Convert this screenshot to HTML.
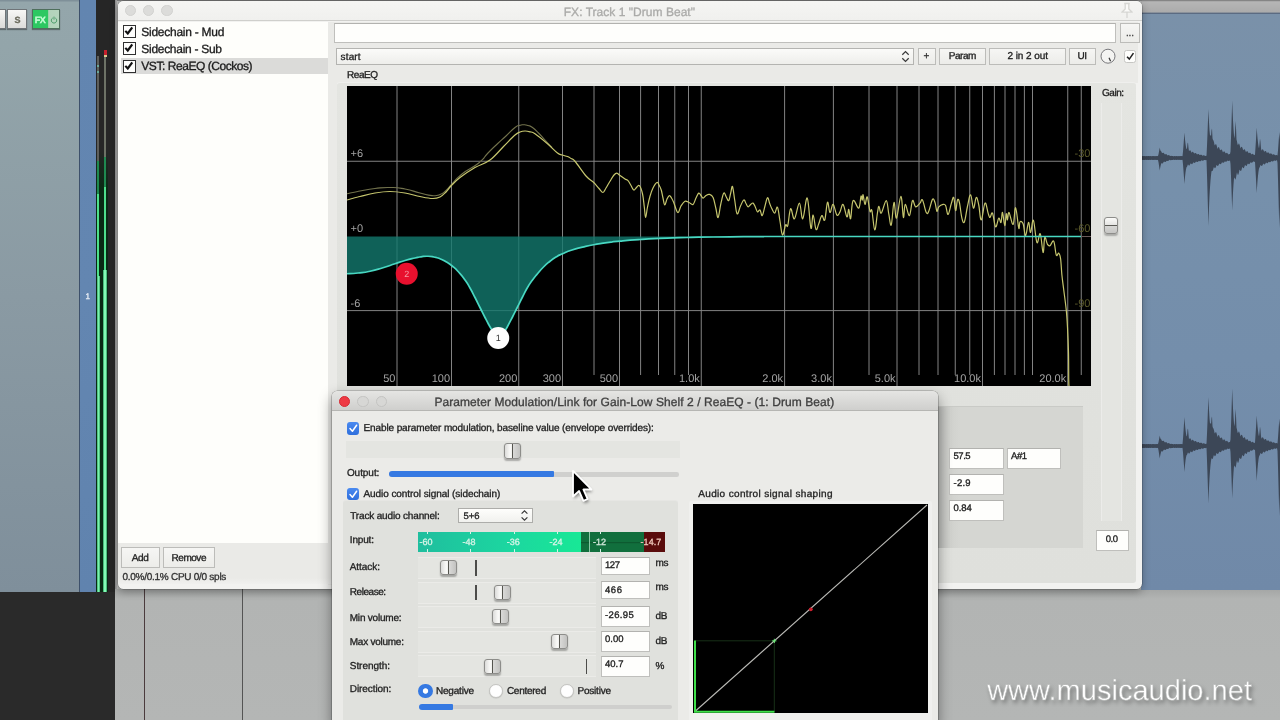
<!DOCTYPE html>
<html lang="en">
<head>
<meta charset="utf-8">
<title>FX: Track 1 "Drum Beat"</title>
<style>
*{box-sizing:border-box;margin:0;padding:0}
html,body{width:1280px;height:720px;overflow:hidden;background:#b3b5b4}
body{font-family:"Liberation Sans",sans-serif;font-size:10px;color:#222;text-rendering:geometricPrecision}
#stage{position:absolute;left:0;top:0;width:1280px;height:720px;overflow:hidden;will-change:transform;filter:blur(.45px)}
.a{position:absolute}
.g{position:absolute;left:0;top:0;width:0;height:0}
.t{position:absolute;white-space:pre;line-height:1;-webkit-text-stroke:.32px}
.btn{background:linear-gradient(#f6f6f4,#ecece9);border:1px solid #bcbcb9}
.inp{background:#fefefc;border:1px solid #bfbfbc;border-top-color:#b2b2af}
.th{width:17px;height:15px;border:1px solid #8d8d8a;border-radius:3px;background:linear-gradient(90deg,#dcdcda 0,#fafaf8 35%,#efefed 47%,#55554f 48%,#55554f 54%,#d9d9d7 55%,#c2c2c0 100%);box-shadow:0 1.5px 1.5px rgba(0,0,0,.28)}
.mk{width:1.5px;background:#4c4c4a}
.band{background:#e4e5e1;border-top:1px solid #ebebe8;border-bottom:1px solid #ebebe8}
.cb{width:12.5px;height:12.5px;border-radius:3px;background:linear-gradient(#4a8af0,#2f6fdc)}
.rb{width:14px;height:14px;border-radius:50%;background:#fefefe;border:1px solid #c4c4c1;box-shadow:0 .5px 1px rgba(0,0,0,.15)}
.lcb{width:13px;height:13px;border:1.8px solid #303030;background:#fefefc}
</style>
</head>
<body>
<div id="stage">
<!-- backdrop: track panel, meters, arrange view -->
<div id="backdrop" class="g">
<div class="a" style="left:0px;top:0px;width:79px;height:592.5px;background:linear-gradient(#7f9099 0,#7f9099 1px,#94a6ab 2px,#93a5aa 8%,#8a9aa3 50%,#7f8f9b 100%)"></div>
<div class="a" style="left:79px;top:0px;width:1.2px;height:592.5px;background:#3d506b"></div>
<div class="a" style="left:80px;top:0px;width:15.6px;height:592.5px;background:linear-gradient(#6285b0,#6386b1 50%,#6083ae)"></div>
<div class="a" style="left:95.6px;top:0px;width:19.6px;height:592.5px;background:#262626"></div>
<div class="a" style="left:95.6px;top:150px;width:12.6px;height:442.5px;background:linear-gradient(#262626,#0a2a14 40px)"></div>
<div class="a" style="left:115px;top:0px;width:3.4px;height:590px;background:linear-gradient(90deg,#8a8a8a,#a4a4a4 55%,#c8c8c6)"></div>
<div class="a" style="left:97.2px;top:56px;width:2px;height:105px;background:#5e5f5c"></div>
<div class="a" style="left:104.2px;top:57px;width:2.2px;height:100px;background:#6d7266"></div>
<div class="a" style="left:104px;top:49.5px;width:2.6px;height:5.6px;background:#c8202c"></div>
<div class="a" style="left:104px;top:55px;width:2.6px;height:2px;background:#d8c890"></div>
<div class="a" style="left:97.3px;top:65px;width:1.8px;height:2.2px;background:#6aa89a"></div>
<div class="a" style="left:97.3px;top:70.5px;width:1.8px;height:2.5px;background:#6aa89a"></div>
<div class="a" style="left:97.2px;top:161px;width:2px;height:33px;background:#1f8a50"></div>
<div class="a" style="left:104.2px;top:156.5px;width:2.2px;height:31px;background:#1f8a50"></div>
<div class="a" style="left:97.2px;top:194px;width:2.2px;height:82px;background:#4ee08c"></div>
<div class="a" style="left:104.2px;top:187px;width:2.2px;height:83px;background:#4ee08c"></div>
<div class="a" style="left:96.7px;top:276px;width:3.5px;height:316px;background:linear-gradient(90deg,#2a9c5c,#7cf2ae 35%,#7cf2ae 65%,#2a9c5c)"></div>
<div class="a" style="left:103.3px;top:270px;width:3.3px;height:322px;background:linear-gradient(90deg,#2a9c5c,#84fbb6 35%,#84fbb6 65%,#2a9c5c)"></div>
<span class="t" style="left:85.5px;top:293px;font-size:8px;color:#e8eef6;">1</span>
<div class="a" style="left:-1px;top:9.4px;width:7px;height:20px;background:linear-gradient(#f6f6f4,#dadad8);border:1px solid #6f7478;box-shadow:0 1px 1px rgba(0,0,0,.35)"></div>
<div class="a" style="left:6.6px;top:9.4px;width:20.4px;height:20px;background:linear-gradient(#f7f7f5,#dcdcda);border:1px solid #6f7478;box-shadow:0 1px 1px rgba(0,0,0,.35)"></div>
<span class="t" style="left:14.4px;top:16px;font-size:9px;color:#6c6c5e;font-weight:bold;">S</span>
<div class="a" style="left:32.2px;top:9.4px;width:28.2px;height:20px;background:linear-gradient(90deg,#2cc862 0,#2cc862 15px,#b2d3ba 15.6px,#b6d5be 100%);border:1px solid #4f6f5c;box-shadow:0 1px 1px rgba(0,0,0,.35)"></div>
<span class="t" style="left:34.8px;top:16px;font-size:9px;color:#c4ffd6;letter-spacing:-0.45px;font-weight:bold;">FX</span>
<svg class="a" style="left:49px;top:15px" width="10" height="10" viewBox="0 0 10 10"><path d="M3.7 3A2.7 2.7 0 1 0 6.3 3M5 1.6V4.6" stroke="#4f9f6c" stroke-width="1" fill="none"/></svg>
<div class="a" style="left:0px;top:591.5px;width:115px;height:129px;background:#2a2a2a"></div>
<div class="a" style="left:115px;top:589px;width:1165px;height:131px;background:linear-gradient(#a4a6a5,#b2b4b3 10px,#b4b6b5)"></div>
<div class="a" style="left:144px;top:589px;width:1px;height:131px;background:#4b3b3d"></div>
<div class="a" style="left:242.2px;top:589px;width:1px;height:131px;background:#545454"></div>
<div class="a" style="left:1141px;top:0px;width:139px;height:14px;background:linear-gradient(#858585 0,#858585 1.2px,#b6b6b6 1.6px,#ababab 12.3px,#5b6b82 12.8px,#5b6b82 100%)"></div>
<div class="a" style="left:1141px;top:14px;width:139px;height:576px;background:linear-gradient(#7a91a9,#7690ab 30%,#748eab 60%,#7089a8)"></div>
<svg class="a" style="left:1141px;top:14px" width="139" height="576" viewBox="1141 14 139 576">
<path d="M1141.5 155.99L1142 156.35L1142.5 156.06L1143 155.9L1143.5 156.08L1144 156.32L1144.5 155.98L1145 155.92L1145.5 156.19L1146 156.2L1146.5 155.92L1147 155.97L1147.5 156.31L1148 156.09L1148.5 155.9L1149 156.05L1149.5 156.36L1150 156L1150.5 155.91L1151 156.15L1151.5 156.23L1152 155.94L1152.5 155.95L1153 156.27L1153.5 156.12L1154 155.9L1154.5 156.03L1155 156.4L1155.5 156.02L1156 155.9L1156.5 156.12L1157 156.27L1157.5 155.95L1158 155.94L1158.5 154.34L1159 151.6L1159.5 148.7L1159.7 147.5L1160 149.03L1160.5 150.8L1161 151.12L1161.5 151.97L1162 153.1L1162.5 153.1L1163 152.72L1163.5 152.76L1164 153.22L1164.5 153.98L1165 154.59L1165.5 154.2L1166 154.08L1166.5 154.28L1167 154.75L1167.5 155.38L1168 155.31L1168.5 155.12L1169 155.15L1169.5 155.42L1170 155.84L1170.5 155.93L1171 155.92L1171.5 155.86L1172 155.99L1172.5 155.9L1173 156.04L1173.5 156.38L1174 156.01L1174.5 155.91L1175 156.14L1175.5 156.25L1176 155.94L1176.5 155.94L1177 156.25L1177.5 156.14L1178 155.91L1178.5 156.01L1179 156.38L1179.5 156.04L1180 155.9L1180.5 156.11L1181 156.29L1181.5 155.96L1182 155.93L1182.5 156.22L1183 151.61L1183.5 145.18L1184 138.27L1184.4 132.5L1184.5 133.81L1185 139.41L1185.5 143.71L1186 147.01L1186.5 149.23L1187 148.52L1187.5 143.62L1188 142.62L1188.5 147.67L1189 151.32L1189.5 150.52L1190 150.25L1190.5 150.62L1191 151.54L1191.5 152.75L1192 152.19L1192.5 151.75L1193 151.81L1193.5 152.38L1194 153.28L1194.5 153.56L1195 153.06L1195.5 152.91L1196 153.19L1196.5 153.81L1197 154.61L1197.5 154.16L1198 153.89L1198.5 153.95L1199 154.34L1199.5 154.95L1200 155.06L1200.5 154.74L1201 154.66L1201.5 154.86L1202 155.28L1202.5 155.77L1203 155.46L1203.5 155.29L1204 155.35L1204.5 155.62L1205 156.03L1205.5 155.97L1206 155.85L1206.5 155.81L1207 145.73L1207.5 133.36L1208 120.09L1208.4 109L1208.5 111.51L1209 122.27L1209.5 130.54L1210 135.58L1210.5 134.98L1211 136.3L1211.5 130.36L1212 128.45L1212.5 138.15L1213 140.08L1213.5 140.42L1214 142.16L1214.5 144.83L1215 145.58L1215.5 144.29L1216 144.01L1216.5 144.89L1217 146.7L1217.5 148.94L1218 147.69L1218.5 147.08L1219 147.35L1219.5 148.47L1220 150.11L1220.5 150.37L1221 149.62L1221.5 149.5L1222 150.09L1222.5 151.22L1223 152.43L1223.5 151.68L1224 151.35L1224.5 151.55L1225 152.26L1225.5 153.28L1226 153.31L1226.5 152.88L1227 152.84L1227.5 153.23L1228 153.93L1228.5 154.57L1229 154.13L1229.5 153.95L1230 154.1L1230.5 151.51L1231 137.95L1231.5 122.96L1232 107.06L1232.2 100.5L1232.5 108.9L1233 120.26L1233.5 128.99L1234 135.45L1234.5 138.4L1235 132.39L1235.5 121.11L1236 127.82L1236.5 139.42L1237 141.52L1237.5 144.26L1238 145.2L1238.5 143.84L1239 143.51L1239.5 144.38L1240 146.23L1240.5 148.53L1241 147.36L1241.5 146.7L1242 146.95L1242.5 148.08L1243 149.77L1243.5 150.14L1244 149.34L1244.5 149.19L1245 149.78L1245.5 150.93L1246 152.26L1246.5 151.48L1247 151.11L1247.5 151.31L1248 152.03L1248.5 153.07L1249 153.17L1249.5 152.71L1250 152.65L1250.5 153.04L1251 153.76L1251.5 154.47L1252 154.01L1252.5 153.81L1253 153.95L1253.5 154.41L1254 155.05L1254.5 155.03L1255 154.56L1255.5 147.37L1256 139.42L1256.5 130.98L1256.7 127.5L1257 131.95L1257.5 137.98L1258 142.61L1258.5 146.17L1259 148.53L1259.5 144.41L1260 138.43L1260.5 141.99L1261 148.14L1261.5 150.83L1262 149.8L1262.5 149.25L1263 149.4L1263.5 150.24L1264 151.53L1264.5 151.72L1265 151.05L1265.5 150.9L1266 151.34L1266.5 152.25L1267 153.25L1267.5 152.57L1268 152.24L1268.5 152.38L1269 152.96L1269.5 153.82L1270 153.83L1270.5 153.41L1271 153.34L1271.5 153.66L1272 154.27L1272.5 154.84L1273 154.41L1273.5 154.21L1274 154.33L1274.5 154.73L1275 155.3L1275.5 155.24L1276 154.98L1276.5 154.95L1277 155.17L1277.5 155.59L1278 150.23L1278.5 143.55L1279 136.43L1279.3 132L1279.5 134.6L1280 140.01L1280.5 144.17L1280.5 195.22L1280 206.43L1279.5 221.01L1279.3 228L1279 216.07L1278.5 196.9L1278 178.93L1277.5 162.96L1277 159.88L1276.5 160.32L1276 160.67L1275.5 160.81L1275 160.73L1274.5 160.44L1274 160.62L1273.5 161.12L1273 161.42L1272.5 161.45L1272 161.2L1271.5 160.92L1271 161.58L1270.5 162.09L1270 162.29L1269.5 162.13L1269 161.68L1268.5 162.05L1268 162.79L1267.5 163.23L1267 163.24L1266.5 162.83L1266 162.51L1265.5 163.52L1265 164.26L1264.5 164.52L1264 164.25L1263.5 163.55L1263 164.26L1262.5 165.36L1262 165.98L1261.5 165.95L1261 165.29L1260.5 164.99L1260 166.5L1259.5 167.59L1259 168.43L1258.5 171.57L1258 175.66L1257.5 180.97L1257 187.89L1256.7 193L1256.5 189.01L1256 179.33L1255.5 170.2L1255 161.95L1254.5 161.8L1254 161.7L1253.5 161.33L1253 161.63L1252.5 162.34L1252 162.79L1251.5 162.85L1251 162.52L1250.5 162.19L1250 163.17L1249.5 163.93L1249 164.25L1248.5 164.05L1248 163.42L1247.5 164.06L1247 165.21L1246.5 165.9L1246 165.95L1245.5 165.37L1245 165.01L1244.5 166.61L1244 167.81L1243.5 168.27L1243 167.89L1242.5 166.82L1242 168.12L1241.5 169.96L1241 171.03L1240.5 171.03L1240 170.02L1239.5 169.71L1239 172.32L1238.5 174.22L1238 174.88L1237.5 174.15L1237 172.33L1236.5 174.87L1236 177.83L1235.5 179.47L1235 179.35L1234.5 177.58L1234 178.36L1233.5 184.49L1233 192.46L1232.5 202.83L1232.2 210.5L1232 204.51L1231.5 189.99L1231 176.3L1230.5 163.92L1230 160.2L1229.5 160.64L1229 160.92L1228.5 160.96L1228 160.77L1227.5 160.54L1227 161.14L1226.5 161.61L1226 161.81L1225.5 161.7L1225 161.32L1224.5 161.67L1224 162.38L1223.5 162.81L1223 162.86L1222.5 162.52L1222 162.24L1221.5 163.22L1221 163.97L1220.5 164.27L1220 164.05L1219.5 163.41L1219 164.13L1218.5 165.27L1218 165.94L1217.5 165.96L1217 165.36L1216.5 165.09L1216 166.69L1215.5 167.87L1215 168.3L1214.5 167.88L1214 166.79L1213.5 168.22L1213 170.05L1212.5 171.09L1212 171.05L1211.5 171.3L1211 175.31L1210.5 180.52L1210 187.29L1209.5 196.11L1209 207.59L1208.5 222.51L1208.4 226L1208 210.61L1207.5 192.19L1207 175.03L1206.5 160.17L1206 160.08L1205.5 160.15L1205 160.07L1204.5 159.91L1204 160.1L1203.5 160.42L1203 160.63L1202.5 160.63L1202 160.42L1201.5 160.28L1201 160.78L1200.5 161.15L1200 161.28L1199.5 161.14L1199 160.78L1198.5 161.16L1198 161.71L1197.5 162.02L1197 161.99L1196.5 161.66L1196 161.53L1195.5 162.29L1195 162.83L1194.5 162.99L1194 162.74L1193.5 162.18L1193 162.88L1192.5 163.7L1192 164.13L1191.5 164.05L1191 163.51L1190.5 163.46L1190 164.6L1189.5 165.39L1189 165.59L1188.5 165.17L1188 164.29L1187.5 165.53L1187 166.74L1186.5 167.35L1186 169.2L1185.5 172.57L1185 176.96L1184.5 182.67L1184.4 184L1184 178.12L1183.5 171.07L1183 164.51L1182.5 159.78L1182 160.07L1181.5 160.04L1181 159.71L1180.5 159.89L1180 160.1L1179.5 159.96L1179 159.62L1178.5 159.99L1178 160.09L1177.5 159.86L1177 159.75L1176.5 160.06L1176 160.06L1175.5 159.75L1175 159.86L1174.5 160.09L1174 159.99L1173.5 159.62L1173 159.96L1172.5 160.1L1172 159.89L1171.5 159.89L1171 160.13L1170.5 160.21L1170 160.11L1169.5 159.87L1169 160.35L1168.5 160.76L1168 160.97L1167.5 160.95L1167 160.7L1166.5 160.88L1166 161.5L1165.5 161.93L1165 162.05L1164.5 161.84L1164 161.49L1163.5 162.37L1163 163.1L1162.5 163.47L1162 163.39L1161.5 162.91L1161 164.31L1160.5 166.2L1160 168.67L1159.7 170.5L1159.5 169.07L1159 165.62L1158.5 162.36L1158 160.06L1157.5 160.05L1157 159.73L1156.5 159.88L1156 160.1L1155.5 159.98L1155 159.6L1154.5 159.97L1154 160.1L1153.5 159.88L1153 159.73L1152.5 160.05L1152 160.06L1151.5 159.77L1151 159.85L1150.5 160.09L1150 160L1149.5 159.64L1149 159.95L1148.5 160.1L1148 159.91L1147.5 159.69L1147 160.03L1146.5 160.08L1146 159.8L1145.5 159.81L1145 160.08L1144.5 160.02L1144 159.68L1143.5 159.92L1143 160.1L1142.5 159.94L1142 159.65L1141.5 160.01ZM1141.5 443.99L1142 444.35L1142.5 444.06L1143 443.9L1143.5 444.08L1144 444.32L1144.5 443.98L1145 443.92L1145.5 444.19L1146 444.2L1146.5 443.92L1147 443.97L1147.5 444.31L1148 444.09L1148.5 443.9L1149 444.05L1149.5 444.36L1150 444L1150.5 443.91L1151 444.15L1151.5 444.23L1152 443.94L1152.5 443.95L1153 444.27L1153.5 444.12L1154 443.9L1154.5 444.03L1155 444.4L1155.5 444.02L1156 443.9L1156.5 444.12L1157 444.27L1157.5 443.95L1158 443.94L1158.5 442.34L1159 439.6L1159.5 436.7L1159.7 435.5L1160 437.03L1160.5 438.8L1161 439.12L1161.5 439.97L1162 441.1L1162.5 441.1L1163 440.72L1163.5 440.76L1164 441.22L1164.5 441.98L1165 442.59L1165.5 442.2L1166 442.08L1166.5 442.28L1167 442.75L1167.5 443.38L1168 443.31L1168.5 443.12L1169 443.15L1169.5 443.42L1170 443.84L1170.5 443.93L1171 443.92L1171.5 443.86L1172 443.99L1172.5 443.9L1173 444.04L1173.5 444.38L1174 444.01L1174.5 443.91L1175 444.14L1175.5 444.25L1176 443.94L1176.5 443.94L1177 444.25L1177.5 444.14L1178 443.91L1178.5 444.01L1179 444.38L1179.5 444.04L1180 443.9L1180.5 444.11L1181 444.29L1181.5 443.96L1182 443.93L1182.5 444.22L1183 438.74L1183.5 431.42L1184 423.56L1184.4 417L1184.5 418.49L1185 424.85L1185.5 429.75L1186 433.51L1186.5 436.4L1187 435.43L1187.5 429.64L1188 428.51L1188.5 434.25L1189 439.32L1189.5 438.52L1190 438.25L1190.5 438.62L1191 439.54L1191.5 440.75L1192 440.19L1192.5 439.75L1193 439.81L1193.5 440.38L1194 441.28L1194.5 441.56L1195 441.06L1195.5 440.91L1196 441.19L1196.5 441.81L1197 442.61L1197.5 442.16L1198 441.89L1198.5 441.95L1199 442.34L1199.5 442.95L1200 443.06L1200.5 442.74L1201 442.66L1201.5 442.86L1202 443.28L1202.5 443.77L1203 443.46L1203.5 443.29L1204 443.35L1204.5 443.62L1205 444.03L1205.5 443.97L1206 443.85L1206.5 443.81L1207 433.73L1207.5 421.36L1208 408.09L1208.4 397L1208.5 399.51L1209 410.27L1209.5 418.54L1210 423.58L1210.5 422.98L1211 424.3L1211.5 418.36L1212 416.45L1212.5 426.15L1213 428.08L1213.5 428.42L1214 430.16L1214.5 432.83L1215 433.58L1215.5 432.29L1216 432.01L1216.5 432.89L1217 434.7L1217.5 436.94L1218 435.69L1218.5 435.08L1219 435.35L1219.5 436.47L1220 438.11L1220.5 438.37L1221 437.62L1221.5 437.5L1222 438.09L1222.5 439.22L1223 440.43L1223.5 439.68L1224 439.35L1224.5 439.55L1225 440.26L1225.5 441.28L1226 441.31L1226.5 440.88L1227 440.84L1227.5 441.23L1228 441.93L1228.5 442.57L1229 442.13L1229.5 441.95L1230 442.1L1230.5 439.51L1231 425.95L1231.5 410.96L1232 395.06L1232.2 388.5L1232.5 396.9L1233 408.26L1233.5 416.99L1234 423.45L1234.5 426.4L1235 420.39L1235.5 409.11L1236 415.82L1236.5 427.42L1237 429.52L1237.5 432.26L1238 433.2L1238.5 431.84L1239 431.51L1239.5 432.38L1240 434.23L1240.5 436.53L1241 435.36L1241.5 434.7L1242 434.95L1242.5 436.08L1243 437.77L1243.5 438.14L1244 437.34L1244.5 437.19L1245 437.78L1245.5 438.93L1246 440.26L1246.5 439.48L1247 439.11L1247.5 439.31L1248 440.03L1248.5 441.07L1249 441.17L1249.5 440.71L1250 440.65L1250.5 441.04L1251 441.76L1251.5 442.47L1252 442.01L1252.5 441.81L1253 441.95L1253.5 442.41L1254 443.05L1254.5 443.03L1255 442.56L1255.5 435.37L1256 427.42L1256.5 418.98L1256.7 415.5L1257 419.95L1257.5 425.98L1258 430.61L1258.5 434.17L1259 436.53L1259.5 432.41L1260 426.43L1260.5 429.99L1261 436.14L1261.5 438.83L1262 437.8L1262.5 437.25L1263 437.4L1263.5 438.24L1264 439.53L1264.5 439.72L1265 439.05L1265.5 438.9L1266 439.34L1266.5 440.25L1267 441.25L1267.5 440.57L1268 440.24L1268.5 440.38L1269 440.96L1269.5 441.82L1270 441.83L1270.5 441.41L1271 441.34L1271.5 441.66L1272 442.27L1272.5 442.84L1273 442.41L1273.5 442.21L1274 442.33L1274.5 442.73L1275 443.3L1275.5 443.24L1276 442.98L1276.5 442.95L1277 443.17L1277.5 443.59L1278 437.78L1278.5 430.72L1279 423.19L1279.3 418.5L1279.5 421.25L1280 426.97L1280.5 431.38L1280.5 483.22L1280 494.43L1279.5 509.01L1279.3 516L1279 504.07L1278.5 484.9L1278 466.93L1277.5 450.96L1277 447.88L1276.5 448.32L1276 448.67L1275.5 448.81L1275 448.73L1274.5 448.44L1274 448.62L1273.5 449.12L1273 449.42L1272.5 449.45L1272 449.2L1271.5 448.92L1271 449.58L1270.5 450.09L1270 450.29L1269.5 450.13L1269 449.68L1268.5 450.05L1268 450.79L1267.5 451.23L1267 451.24L1266.5 450.83L1266 450.51L1265.5 451.52L1265 452.26L1264.5 452.52L1264 452.25L1263.5 451.55L1263 452.26L1262.5 453.36L1262 453.98L1261.5 453.95L1261 453.29L1260.5 452.99L1260 454.5L1259.5 455.59L1259 456.43L1258.5 459.57L1258 463.66L1257.5 468.97L1257 475.89L1256.7 481L1256.5 477.01L1256 467.33L1255.5 458.2L1255 449.95L1254.5 449.8L1254 449.7L1253.5 449.33L1253 449.63L1252.5 450.34L1252 450.79L1251.5 450.85L1251 450.52L1250.5 450.19L1250 451.17L1249.5 451.93L1249 452.25L1248.5 452.05L1248 451.42L1247.5 452.06L1247 453.21L1246.5 453.9L1246 453.95L1245.5 453.37L1245 453.01L1244.5 454.61L1244 455.81L1243.5 456.27L1243 455.89L1242.5 454.82L1242 456.12L1241.5 457.96L1241 459.03L1240.5 459.03L1240 458.02L1239.5 457.71L1239 460.32L1238.5 462.22L1238 462.88L1237.5 462.15L1237 460.33L1236.5 462.87L1236 465.83L1235.5 467.47L1235 467.35L1234.5 465.58L1234 466.36L1233.5 472.49L1233 480.46L1232.5 490.83L1232.2 498.5L1232 492.51L1231.5 477.99L1231 464.3L1230.5 451.92L1230 448.2L1229.5 448.64L1229 448.92L1228.5 448.96L1228 448.77L1227.5 448.54L1227 449.14L1226.5 449.61L1226 449.81L1225.5 449.7L1225 449.32L1224.5 449.67L1224 450.38L1223.5 450.81L1223 450.86L1222.5 450.52L1222 450.24L1221.5 451.22L1221 451.97L1220.5 452.27L1220 452.05L1219.5 451.41L1219 452.13L1218.5 453.27L1218 453.94L1217.5 453.96L1217 453.36L1216.5 453.09L1216 454.69L1215.5 455.87L1215 456.3L1214.5 455.88L1214 454.79L1213.5 456.22L1213 458.05L1212.5 459.09L1212 459.05L1211.5 458L1211 460.63L1210.5 465.04L1210 470.77L1209.5 478.23L1209 487.93L1208.5 500.55L1208.4 503.5L1208 490.49L1207.5 474.91L1207 460.4L1206.5 447.83L1206 448.08L1205.5 448.15L1205 448.07L1204.5 447.91L1204 448.1L1203.5 448.42L1203 448.63L1202.5 448.63L1202 448.42L1201.5 448.28L1201 448.78L1200.5 449.15L1200 449.28L1199.5 449.14L1199 448.78L1198.5 449.16L1198 449.71L1197.5 450.02L1197 449.99L1196.5 449.66L1196 449.53L1195.5 450.29L1195 450.83L1194.5 450.99L1194 450.74L1193.5 450.18L1193 450.88L1192.5 451.7L1192 452.13L1191.5 452.05L1191 451.51L1190.5 451.46L1190 452.6L1189.5 453.39L1189 453.59L1188.5 453.17L1188 452.29L1187.5 453.53L1187 454.74L1186.5 455.35L1186 457.2L1185.5 460.57L1185 464.96L1184.5 470.67L1184.4 472L1184 466.12L1183.5 459.07L1183 452.51L1182.5 447.78L1182 448.07L1181.5 448.04L1181 447.71L1180.5 447.89L1180 448.1L1179.5 447.96L1179 447.62L1178.5 447.99L1178 448.09L1177.5 447.86L1177 447.75L1176.5 448.06L1176 448.06L1175.5 447.75L1175 447.86L1174.5 448.09L1174 447.99L1173.5 447.62L1173 447.96L1172.5 448.1L1172 447.89L1171.5 447.89L1171 448.13L1170.5 448.21L1170 448.11L1169.5 447.87L1169 448.35L1168.5 448.76L1168 448.97L1167.5 448.95L1167 448.7L1166.5 448.88L1166 449.5L1165.5 449.93L1165 450.05L1164.5 449.84L1164 449.49L1163.5 450.37L1163 451.1L1162.5 451.47L1162 451.39L1161.5 450.91L1161 452.31L1160.5 454.2L1160 456.67L1159.7 458.5L1159.5 457.07L1159 453.62L1158.5 450.36L1158 448.06L1157.5 448.05L1157 447.73L1156.5 447.88L1156 448.1L1155.5 447.98L1155 447.6L1154.5 447.97L1154 448.1L1153.5 447.88L1153 447.73L1152.5 448.05L1152 448.06L1151.5 447.77L1151 447.85L1150.5 448.09L1150 448L1149.5 447.64L1149 447.95L1148.5 448.1L1148 447.91L1147.5 447.69L1147 448.03L1146.5 448.08L1146 447.8L1145.5 447.81L1145 448.08L1144.5 448.02L1144 447.68L1143.5 447.92L1143 448.1L1142.5 447.94L1142 447.65L1141.5 448.01Z" fill="#3c4757"/>
</svg>
<div class="a" style="left:117px;top:0px;width:1025px;height:1.2px;background:#7c7c7c"></div>
</div>
<!-- FX chain window -->
<section id="fx-window" class="g">
<div class="a" style="left:117.6px;top:1px;width:1024.2px;height:587.8px;background:#f2f2f0;border-radius:5.5px;box-shadow:0 0 0 .6px rgba(0,0,0,.28),0 3px 9px rgba(0,0,0,.3)"></div>
<div class="a" style="left:117.6px;top:1px;width:1024.2px;height:20px;background:linear-gradient(#f5f5f3,#f0f0ee);border-radius:5.5px 5.5px 0 0;border-bottom:1px solid #cfcfcc"></div>
<div class="a" style="left:125px;top:5.2px;width:11.2px;height:11.2px;border-radius:50%;background:#dcdcda;border:.5px solid #d2d2d0"></div>
<div class="a" style="left:143.1px;top:5.2px;width:11.2px;height:11.2px;border-radius:50%;background:#dcdcda;border:.5px solid #d2d2d0"></div>
<div class="a" style="left:161.4px;top:5.2px;width:11.2px;height:11.2px;border-radius:50%;background:#dcdcda;border:.5px solid #d2d2d0"></div>
<span class="t" style="left:563.75px;top:6px;font-size:12px;color:#ababa9;letter-spacing:0.03px;">FX: Track 1 &quot;Drum Beat&quot;</span>
<svg class="a" style="left:1119px;top:2px" width="16" height="17" viewBox="0 0 16 17"><path d="M5.2 1.5h5.6M6.2 1.8v5.2l-3.4 3.2h10.4L9.8 7V1.8M8 10.4v5.6" stroke="#d6d6d3" stroke-width="1.3" fill="#fafaf8" stroke-linejoin="round"/></svg>
<div class="a" style="left:118.2px;top:21.5px;width:209.5px;height:521.2px;background:#fefefb"></div>
<div class="a" style="left:327.7px;top:21.5px;width:9.3px;height:563px;background:#eaeae7"></div>
<div class="a" style="left:118.2px;top:542.7px;width:219px;height:41.8px;background:linear-gradient(#eaeae7 85%,#f0f0ee)"></div>
<div class="a" style="left:327.7px;top:21.5px;width:810px;height:61px;background:#eaeae7"></div>
<div class="a" style="left:121px;top:57.8px;width:206.7px;height:16px;background:#dbdbd9"></div>
<div class="a lcb" style="left:122.8px;top:25px;width:13px;height:13px;"><svg width="9.4" height="9.4" viewBox="0 0 10 10" style="display:block"><path d="M1.4 5.2L4 8 8.8 1.6" stroke="#111" stroke-width="2.3" fill="none"/></svg></div>
<span class="t" style="left:141.3px;top:26px;font-size:12px;color:#1c1c1c;letter-spacing:-0.26px;">Sidechain - Mud</span>
<div class="a lcb" style="left:122.8px;top:42.3px;width:13px;height:13px;"><svg width="9.4" height="9.4" viewBox="0 0 10 10" style="display:block"><path d="M1.4 5.2L4 8 8.8 1.6" stroke="#111" stroke-width="2.3" fill="none"/></svg></div>
<span class="t" style="left:141.3px;top:43px;font-size:12px;color:#1c1c1c;letter-spacing:-0.29px;">Sidechain - Sub</span>
<div class="a lcb" style="left:122.8px;top:59.6px;width:13px;height:13px;"><svg width="9.4" height="9.4" viewBox="0 0 10 10" style="display:block"><path d="M1.4 5.2L4 8 8.8 1.6" stroke="#111" stroke-width="2.3" fill="none"/></svg></div>
<span class="t" style="left:141.3px;top:60px;font-size:12px;color:#1c1c1c;letter-spacing:-0.45px;">VST: ReaEQ (Cockos)</span>
<div class="a btn" style="left:121.3px;top:547px;width:38.3px;height:20.5px;"></div>
<div class="a btn" style="left:162.5px;top:547px;width:52px;height:20.5px;"></div>
<span class="t" style="left:131.75px;top:554px;font-size:10px;color:#222;letter-spacing:-0.4px;">Add</span>
<span class="t" style="left:171.5px;top:554px;font-size:10px;color:#222;letter-spacing:-0.45px;">Remove</span>
<span class="t" style="left:122.5px;top:573px;font-size:10px;color:#333;letter-spacing:-0.27px;">0.0%/0.1% CPU 0/0 spls</span>
<div class="a inp" style="left:334.4px;top:23px;width:781.6px;height:19.5px;"></div>
<div class="a btn" style="left:1120px;top:23px;width:19.8px;height:19.5px;"></div>
<span class="t" style="left:1126px;top:29px;font-size:10px;color:#444;letter-spacing:-0.17px;">...</span>
<div class="a" style="left:336px;top:47.5px;width:577.8px;height:17.8px;background:linear-gradient(#fbfbf9,#eeeeeb);border:1px solid #b4b4b1"></div>
<span class="t" style="left:340.6px;top:53px;font-size:10px;color:#222;letter-spacing:0.14px;">start</span>
<svg class="a" style="left:900px;top:50px" width="11" height="13" viewBox="0 0 11 13"><path d="M2.3 4.7L5.5 1.6 8.7 4.7M2.3 8.3L5.5 11.4 8.7 8.3" stroke="#3a3a3a" stroke-width="1.25" fill="none"/></svg>
<div class="a btn" style="left:917.5px;top:47.5px;width:18.5px;height:17.8px;"></div>
<span class="t" style="left:923.6px;top:52px;font-size:10px;color:#333;">+</span>
<div class="a btn" style="left:939px;top:47.5px;width:46.6px;height:17.8px;"></div>
<span class="t" style="left:948.75px;top:52px;font-size:10px;color:#222;letter-spacing:-0.45px;">Param</span>
<div class="a btn" style="left:989px;top:47.5px;width:77px;height:17.8px;"></div>
<span class="t" style="left:1007.5px;top:52px;font-size:10px;color:#222;letter-spacing:-0.07px;">2 in 2 out</span>
<div class="a btn" style="left:1069px;top:47.5px;width:26.6px;height:17.8px;"></div>
<span class="t" style="left:1077.5px;top:52px;font-size:10px;color:#222;letter-spacing:-0.45px;">UI</span>
<svg class="a" style="left:1099px;top:47px" width="18" height="18" viewBox="0 0 18 18"><circle cx="9" cy="9.2" r="7" fill="#f4f4f2" stroke="#77777a" stroke-width="1"/><path d="M10 10.8L11.6 14.2" stroke="#333" stroke-width="1.2"/></svg>
<div class="a" style="left:1124px;top:50px;width:12.3px;height:12.5px;background:#fefefc;border:1px solid #c6c6c3;border-radius:2.5px"><svg width="10.3" height="10.5" viewBox="0 0 10 10" style="display:block"><path d="M2 5.4L4.2 7.8 8.2 2" stroke="#222" stroke-width="1.5" fill="none"/></svg></div>
<div class="a" style="left:337px;top:82px;width:798.5px;height:501px;background:linear-gradient(#e4e5e1,#e1e2de 40%,#dfe0dc);border-top:1px solid #efefed;border-radius:3px"></div>
<span class="t" style="left:347px;top:71px;font-size:10px;color:#222;letter-spacing:-0.45px;">ReaEQ</span>
<svg class="a" style="left:347px;top:86px" width="744" height="300" viewBox="347 86 744 300">
<rect x="347" y="86" width="744" height="300" fill="#000"/>
<path d="M397 86V386M451.5 86V386M518.75 86V386M562.5 86V386M619.5 86V386M701.25 86V386M784.6 86V386M833.4 86V386M897 86V386M982.5 86V386M1067.75 86V386M594 86V375M640.6 86V375M658.5 86V375M674.75 86V375M688.5 86V375M869 86V375M919 86V375M938 86V375M955.25 86V375M969.75 86V375M994.4 86V375M1005 86V375M1015 86V375M1024.4 86V375M1032.5 86V375M1081.25 86V375M347 161.25H1091M347 310.6H1091" stroke="#8a8a8a" stroke-width="1" fill="none" opacity=".95"/>
<path d="M1081 236.5H1091" stroke="#6a5a5a" stroke-width="1"/>
<path d="M347 273.75C350.3 273.52 351.1 273.75 358 273C364.9 272.25 362.5 272.84 370 271.25C377.5 269.66 375.5 269.95 383 267.7C390.5 265.45 388.4 265.91 395 263.75C401.6 261.59 399 262.23 405 260.5C411 258.77 410.2 259.11 415 258C419.8 256.89 417.25 257.32 421 256.8C424.75 256.28 423.6 256.19 427.5 256.25C431.4 256.31 430.25 256.25 434 257C437.75 257.75 436.4 257.31 440 258.75C443.6 260.19 442.25 259.55 446 261.8C449.75 264.05 448.6 263.04 452.5 266.25C456.4 269.46 455.25 268.38 459 272.5C462.75 276.62 461.7 275.35 465 280C468.3 284.65 467 282.75 470 288C473 293.25 472 291.65 475 297.5C478 303.35 477 301.5 480 307.5C483 313.5 482.3 312.25 485 317.5C487.7 322.75 486.75 320.95 489 325C491.25 329.05 490.55 327.85 492.5 331C494.45 334.15 493.76 333.55 495.5 335.5C497.24 337.45 496.5 337.5 498.3 337.5C500.1 337.5 499.64 337.3 501.5 335.5C503.36 333.7 502.7 334.2 504.5 331.5C506.3 328.8 505.1 330.85 507.5 326.5C509.9 322.15 509.5 322.85 512.5 317C515.5 311.15 514.5 313 517.5 307C520.5 301 519.5 302.85 522.5 297C525.5 291.15 524.5 292.6 527.5 287.5C530.5 282.4 529.5 284.12 532.5 280C535.5 275.88 534.2 277.65 537.5 273.75C540.8 269.85 539.75 270.75 543.5 267C547.25 263.25 546.25 264.25 550 261.25C553.75 258.25 552.25 259.25 556 257C559.75 254.75 557.7 255.85 562.5 253.75C567.3 251.65 566 251.97 572 250C578 248.03 575.6 248.85 582.5 247.2C589.4 245.55 587.65 245.88 595 244.5C602.35 243.12 599.5 243.62 607 242.6C614.5 241.58 610.1 242.03 620 241.1C629.9 240.17 628 240.31 640 239.5C652 238.69 648 238.94 660 238.4C672 237.86 668 238.06 680 237.7C692 237.34 685 237.47 700 237.2C715 236.93 712 236.98 730 236.8C748 236.62 739 236.69 760 236.6C781 236.51 703.7 236.53 800 236.5C896.3 236.47 996.7 236.5 1081 236.5L1081 236.5L347 236.5Z" fill="rgba(19,121,110,.8)"/>
<g font-family="Liberation Sans, sans-serif" font-size="11" fill="#a3a3a3">
<text x="350.5" y="157">+6</text>
<text x="350.5" y="232">+0</text>
<text x="350.5" y="307">-6</text>
<text x="395.5" y="382.3" text-anchor="end">50</text>
<text x="450" y="382.3" text-anchor="end">100</text>
<text x="517.25" y="382.3" text-anchor="end">200</text>
<text x="561" y="382.3" text-anchor="end">300</text>
<text x="618" y="382.3" text-anchor="end">500</text>
<text x="699.75" y="382.3" text-anchor="end">1.0k</text>
<text x="783.1" y="382.3" text-anchor="end">2.0k</text>
<text x="831.9" y="382.3" text-anchor="end">3.0k</text>
<text x="895.5" y="382.3" text-anchor="end">5.0k</text>
<text x="981" y="382.3" text-anchor="end">10.0k</text>
<text x="1066.25" y="382.3" text-anchor="end">20.0k</text>
</g>
<g font-family="Liberation Sans, sans-serif" font-size="11" fill="#5c5b2b" text-anchor="end">
<text x="1090.5" y="157">-30</text>
<text x="1090.5" y="232">-60</text>
<text x="1090.5" y="307">-90</text>
</g>
<path d="M347 193.75C350.9 192.93 351.6 192.57 360 191C368.4 189.43 366 189.55 375 188.5C384 187.45 381 187.35 390 187.5C399 187.65 396 187.35 405 189C414 190.65 411.9 191.02 420 193C428.1 194.98 426 195.15 432 195.6C438 196.05 435.8 196.03 440 194.5C444.2 192.97 442.4 193.65 446 190.5C449.6 187.35 447.2 188.95 452 184C456.8 179.05 453.98 180.3 462 174C470.02 167.7 470.95 169.3 478.75 163C486.55 156.7 482.38 158.78 488 153C493.62 147.22 492.1 148.85 497.5 143.75C502.9 138.65 500.75 140.88 506 136C511.25 131.12 510.8 130.71 515 127.5C519.2 124.29 517.38 126.12 520 125.3C522.62 124.47 521.35 124.69 523.75 124.75C526.15 124.81 525.38 124.67 528 125.5C530.62 126.33 529.2 125.1 532.5 127.5C535.8 129.9 535.25 129.75 539 133.5C542.75 137.25 541.1 135.8 545 140C548.9 144.2 549.9 145.25 552 147.5" stroke="#72724c" stroke-width="1.1" fill="none"/>
<path d="M347 200C349.38 199.36 354.87 197.78 360 196.5C365.13 195.22 369.5 193.92 375 193C380.5 192.08 384.5 191.5 390 191.5C395.5 191.5 399.5 192.08 405 193C410.5 193.92 414.96 195.49 420 196.5C425.04 197.51 428.83 198.41 432.5 198.5C436.17 198.59 437.52 198.19 440 197C442.48 195.81 443.98 194.02 446 192C448.02 189.98 448.43 188.66 451 186C453.57 183.34 455.6 180.89 460 177.5C464.4 174.11 469.5 170.71 475 167.5C480.5 164.29 484.73 163.9 490 160C495.27 156.1 499.17 150.83 503.75 146.25C508.33 141.67 512.02 137.61 515 135C517.98 132.39 518.17 132.73 520 132C521.83 131.27 523.17 131.04 525 131C526.83 130.96 528.17 131.3 530 131.8C531.83 132.3 531.79 131.56 535 133.75C538.21 135.94 543.38 140.22 547.5 143.75C551.62 147.28 554.84 150.94 557.5 153C560.16 155.06 560.17 154.36 562 155C563.83 155.64 565.85 155.86 567.5 156.5C569.15 157.14 569.62 157.63 571 158.5C572.38 159.37 572.2 158 575 161.25C577.8 164.5 582.81 172.35 586.25 176.25C589.69 180.15 591.41 180.25 593.75 182.5C596.09 184.75 597.3 186.67 599 188.5C600.7 190.33 601.72 192.59 603 192.5C604.28 192.41 604.72 190.06 606 188C607.28 185.94 608.53 183.63 610 181.25C611.47 178.87 612.74 176.49 614 175C615.26 173.51 615.8 172.99 616.9 173.1C618 173.21 618.51 174.52 620 175.6C621.49 176.68 623.53 178.08 625 179C626.47 179.92 626.9 179.41 628 180.6C629.1 181.79 629.95 183.78 631 185.5C632.05 187.22 632.74 189.63 633.75 190C634.76 190.37 635.46 188.31 636.5 187.5C637.54 186.69 638.3 184.45 639.4 185.6C640.5 186.75 641.6 189.83 642.5 193.75C643.4 197.67 643.73 202.65 644.3 207C644.87 211.35 645.01 217.5 645.6 217.5C646.19 217.5 646.69 210.9 647.5 207C648.31 203.1 648.99 199.73 650 196.25C651.01 192.77 651.74 190.52 653 188C654.26 185.48 655.8 183.05 656.9 182.5C658 181.95 658.2 183.62 659 185C659.8 186.38 660.52 187.62 661.25 190C661.98 192.38 662.36 195.25 663 198C663.64 200.75 664.02 204.82 664.75 205C665.48 205.18 666.15 200.72 667 199C667.85 197.28 668.57 195.78 669.4 195.6C670.23 195.42 670.7 196.73 671.5 198C672.3 199.27 672.6 199.84 673.75 202.5C674.9 205.16 676.42 211.86 677.75 212.5C679.08 213.14 679.67 208.06 681 206C682.33 203.94 683.53 201.89 685 201.25C686.47 200.61 687.51 201.92 689 202.5C690.49 203.08 691.82 205.22 693.1 204.4C694.38 203.58 694.96 200.07 696 198C697.04 195.93 697.83 193.56 698.75 193.1C699.67 192.64 700.2 194.58 701 195.5C701.8 196.42 702.18 198.1 703.1 198.1C704.02 198.1 704.85 196.18 706 195.5C707.15 194.82 708.1 194.03 709.4 194.4C710.7 194.77 711.93 195.01 713.1 197.5C714.27 199.99 714.88 204.33 715.8 208C716.72 211.67 717.18 218.23 718.1 217.5C719.02 216.77 719.76 208.47 720.8 204C721.84 199.53 722.74 194.38 723.75 193.1C724.76 191.82 725.38 195.62 726.3 197C727.22 198.38 727.94 201.33 728.75 200.6C729.56 199.87 730.01 195.57 730.7 193C731.39 190.43 731.77 185.32 732.5 186.6C733.23 187.88 733.86 195.02 734.7 200C735.54 204.98 736.04 212.65 737.1 213.75C738.16 214.85 739.28 208.52 740.5 206C741.72 203.48 742.74 200.46 743.75 200C744.76 199.54 745.2 202.23 746 203.5C746.8 204.77 747.26 206.72 748.1 206.9C748.94 207.08 749.68 205.2 750.6 204.5C751.52 203.8 752.24 202.64 753.1 203.1C753.96 203.56 754.49 205.39 755.3 207C756.11 208.61 756.64 211.35 757.5 211.9C758.36 212.45 759.13 209.32 760 210C760.87 210.68 761.33 216.33 762.25 215.6C763.17 214.87 764.04 209.27 765 206C765.96 202.73 766.64 198.21 767.5 197.75C768.36 197.29 768.89 201.48 769.7 203.5C770.51 205.52 770.97 206.99 771.9 208.75C772.83 210.51 773.72 213.38 774.75 213.1C775.78 212.82 776.54 205.76 777.5 207.25C778.46 208.74 779.08 216.16 780 221.25C780.92 226.34 781.47 234.31 782.5 235C783.53 235.69 784.64 226.72 785.6 225C786.56 223.28 786.83 228.58 787.75 225.6C788.67 222.62 789.38 210.01 790.6 208.75C791.82 207.49 792.79 219.79 794.4 218.75C796.01 217.71 797.87 203.1 799.4 203.1C800.93 203.1 801.31 219.67 802.75 218.75C804.19 217.83 805.76 196.39 807.25 198.1C808.74 199.81 809.83 225 810.9 228.1C811.97 231.2 812.16 214.76 813.1 215C814.04 215.24 814.96 227.8 816 229.4C817.04 231 817.67 226.28 818.75 223.75C819.83 221.22 820.8 216.29 821.9 215.6C823 214.91 823.72 222.45 824.75 220C825.78 217.55 826.54 203.62 827.5 202.25C828.46 200.88 828.97 212.11 830 212.5C831.03 212.89 831.84 203.94 833.1 204.4C834.37 204.86 835.63 213.62 836.9 215C838.16 216.38 838.86 213.84 840 211.9C841.14 209.96 841.84 203.48 843.1 204.4C844.37 205.32 845.86 215.98 846.9 216.9C847.94 217.82 848.07 209.06 848.75 209.4C849.43 209.74 849.8 220.36 850.6 218.75C851.4 217.14 851.61 202.55 853.1 200.6C854.59 198.65 857.3 208.9 858.75 208.1C860.2 207.3 860.36 197.73 861 196.25C861.64 194.77 861.87 200.28 862.25 200C862.63 199.72 862.6 193.94 863.1 194.75C863.6 195.56 864.24 204.01 865 204.4C865.76 204.79 866.33 195.64 867.25 196.9C868.17 198.16 869.15 208.74 870 211.25C870.85 213.76 871.03 207.16 871.9 210.6C872.77 214.04 873.72 229.65 874.75 230C875.78 230.35 876.72 216.85 877.5 212.5C878.28 208.15 878.31 206.14 879 206.25C879.69 206.36 879.92 214.14 881.25 213.1C882.58 212.06 884.88 200.48 886.25 200.6C887.62 200.72 887.83 209.28 888.75 213.75C889.67 218.22 890.29 227.06 891.25 225C892.21 222.94 893.04 203.77 894 202.5C894.96 201.23 895.24 219.25 896.5 218.1C897.76 216.95 899.63 196.36 900.9 196.25C902.16 196.14 902.6 216.01 903.4 217.5C904.2 218.99 904.15 204.75 905.25 204.4C906.35 204.05 908.07 216.3 909.4 215.6C910.73 214.9 911.36 202.19 912.5 200.6C913.64 199 914.23 206.44 915.6 206.9C916.98 207.36 918.74 204.37 920 203.1C921.26 201.83 921.35 198.28 922.5 200C923.65 201.72 925.1 210.44 926.25 212.5C927.4 214.56 927.6 213.65 928.75 211.25C929.9 208.85 931.35 201 932.5 199.4C933.65 197.8 934.19 200.33 935 202.5C935.81 204.67 936.21 210.44 936.9 211.25C937.59 212.06 937.61 208.16 938.75 206.9C939.89 205.64 941.84 204.64 943.1 204.4C944.36 204.16 944.68 203.77 945.6 205.6C946.52 207.43 947.06 214.74 948.1 214.4C949.14 214.06 950.21 206.85 951.25 203.75C952.29 200.65 952.95 196.24 953.75 197.5C954.55 198.76 954.91 210.14 955.6 210.6C956.29 211.06 956.8 201.48 957.5 200C958.2 198.52 958.59 199.18 959.4 202.5C960.21 205.82 960.98 214.54 961.9 218.1C962.82 221.66 963.37 224.07 964.4 221.9C965.43 219.73 966.36 211.23 967.5 206.25C968.64 201.27 969.5 194.41 970.6 194.75C971.7 195.09 972.46 207.6 973.5 208.1C974.54 208.6 975.29 198.07 976.25 197.5C977.21 196.93 977.83 200.88 978.75 205C979.67 209.12 980.1 220.35 981.25 220C982.4 219.65 983.74 204.37 985 203.1C986.26 201.83 987.18 210.46 988.1 213.1C989.02 215.74 989.19 217.5 990 217.5C990.81 217.5 991.47 211.38 992.5 213.1C993.53 214.82 994.45 225.98 995.6 226.9C996.75 227.82 997.76 218.91 998.75 218.1C999.74 217.29 1000.31 223.53 1001 222.5C1001.69 221.47 1001.81 211.93 1002.5 212.5C1003.19 213.07 1004.06 225.37 1004.75 225.6C1005.44 225.83 1005.75 214.78 1006.25 213.75C1006.75 212.72 1007 220.23 1007.5 220C1008 219.77 1007.97 211.69 1009 212.5C1010.03 213.31 1011.89 225.27 1013.1 224.4C1014.31 223.53 1014.56 207.07 1015.6 207.75C1016.64 208.43 1017.94 225.51 1018.75 228.1C1019.56 230.69 1019.2 222.7 1020 221.9C1020.8 221.1 1022.07 221.24 1023.1 223.75C1024.13 226.26 1024.61 235.83 1025.6 235.6C1026.59 235.37 1027.58 223.07 1028.5 222.5C1029.42 221.93 1029.7 232.91 1030.6 232.5C1031.5 232.09 1032.25 218.42 1033.4 220.25C1034.56 222.08 1035.64 240.03 1036.9 242.5C1038.16 244.97 1039.11 231.92 1040.25 233.75C1041.39 235.58 1042.27 251.81 1043.1 252.5C1043.92 253.19 1043.94 238.98 1044.75 237.5C1045.56 236.02 1046.54 242.92 1047.5 244.4C1048.46 245.88 1048.85 246.18 1050 245.6C1051.15 245.02 1052.6 239.53 1053.75 241.25C1054.9 242.97 1055.33 252.83 1056.25 255C1057.17 257.17 1057.95 252.41 1058.75 253.1C1059.55 253.79 1060.02 254.73 1060.6 258.75C1061.18 262.76 1061.32 269.27 1061.9 275C1062.48 280.73 1062.95 283.58 1063.75 290C1064.55 296.42 1065.56 303.12 1066.25 310C1066.94 316.88 1067.09 319.71 1067.5 327.5C1067.91 335.29 1068.27 342.88 1068.5 352.5C1068.73 362.12 1068.66 373.86 1068.75 380C1068.84 386.14 1068.95 384.9 1069 386" stroke="#c6c66e" stroke-width="1.2" fill="none" stroke-linejoin="round"/>
<path d="M347 273.75C350.3 273.52 351.1 273.75 358 273C364.9 272.25 362.5 272.84 370 271.25C377.5 269.66 375.5 269.95 383 267.7C390.5 265.45 388.4 265.91 395 263.75C401.6 261.59 399 262.23 405 260.5C411 258.77 410.2 259.11 415 258C419.8 256.89 417.25 257.32 421 256.8C424.75 256.28 423.6 256.19 427.5 256.25C431.4 256.31 430.25 256.25 434 257C437.75 257.75 436.4 257.31 440 258.75C443.6 260.19 442.25 259.55 446 261.8C449.75 264.05 448.6 263.04 452.5 266.25C456.4 269.46 455.25 268.38 459 272.5C462.75 276.62 461.7 275.35 465 280C468.3 284.65 467 282.75 470 288C473 293.25 472 291.65 475 297.5C478 303.35 477 301.5 480 307.5C483 313.5 482.3 312.25 485 317.5C487.7 322.75 486.75 320.95 489 325C491.25 329.05 490.55 327.85 492.5 331C494.45 334.15 493.76 333.55 495.5 335.5C497.24 337.45 496.5 337.5 498.3 337.5C500.1 337.5 499.64 337.3 501.5 335.5C503.36 333.7 502.7 334.2 504.5 331.5C506.3 328.8 505.1 330.85 507.5 326.5C509.9 322.15 509.5 322.85 512.5 317C515.5 311.15 514.5 313 517.5 307C520.5 301 519.5 302.85 522.5 297C525.5 291.15 524.5 292.6 527.5 287.5C530.5 282.4 529.5 284.12 532.5 280C535.5 275.88 534.2 277.65 537.5 273.75C540.8 269.85 539.75 270.75 543.5 267C547.25 263.25 546.25 264.25 550 261.25C553.75 258.25 552.25 259.25 556 257C559.75 254.75 557.7 255.85 562.5 253.75C567.3 251.65 566 251.97 572 250C578 248.03 575.6 248.85 582.5 247.2C589.4 245.55 587.65 245.88 595 244.5C602.35 243.12 599.5 243.62 607 242.6C614.5 241.58 610.1 242.03 620 241.1C629.9 240.17 628 240.31 640 239.5C652 238.69 648 238.94 660 238.4C672 237.86 668 238.06 680 237.7C692 237.34 685 237.47 700 237.2C715 236.93 712 236.98 730 236.8C748 236.62 739 236.69 760 236.6C781 236.51 703.7 236.53 800 236.5C896.3 236.47 996.7 236.5 1081 236.5" stroke="#48d8c2" stroke-width="1.7" fill="none"/>
<circle cx="406.75" cy="273.75" r="11" fill="#e8102e"/>
<text x="406.75" y="277" font-family="Liberation Sans, sans-serif" font-size="9" fill="#f59aa5" text-anchor="middle">2</text>
<circle cx="498.25" cy="338" r="11" fill="#fdfdfd"/>
<text x="498.25" y="341.2" font-family="Liberation Sans, sans-serif" font-size="9" fill="#333" text-anchor="middle">1</text>
</svg>
<div class="a" style="left:938px;top:406px;width:144.5px;height:142px;background:linear-gradient(90deg,#bdbebb,#d0d1cd 12px,#d5d6d2 22px);border-top:1px solid #c9cac6"></div>
<div class="a inp" style="left:949.4px;top:448px;width:54.2px;height:21px;"></div>
<span class="t" style="left:953.5px;top:452px;font-size:9.5px;color:#1c1c1c;letter-spacing:-0.45px;">57.5</span>
<div class="a inp" style="left:1007px;top:448px;width:53.8px;height:21px;"></div>
<span class="t" style="left:1011.1px;top:452px;font-size:9.5px;color:#1c1c1c;letter-spacing:-0.45px;">A#1</span>
<div class="a inp" style="left:949.4px;top:474.4px;width:54.2px;height:21px;"></div>
<span class="t" style="left:953.5px;top:479px;font-size:9.5px;color:#1c1c1c;letter-spacing:0.24px;">-2.9</span>
<div class="a inp" style="left:949.4px;top:499.6px;width:54.2px;height:21px;"></div>
<span class="t" style="left:953.5px;top:504px;font-size:9.5px;color:#1c1c1c;letter-spacing:-0.03px;">0.84</span>
<span class="t" style="left:1102px;top:89px;font-size:10px;color:#222;letter-spacing:-0.45px;">Gain:</span>
<div class="a" style="left:1101px;top:103px;width:21px;height:418px;background:#e4e5e1;border-left:1px solid #ececea;border-right:1px solid #ececea"></div>
<div class="a" style="left:1103.7px;top:217.3px;width:14.4px;height:17px;border:1px solid #8d8d8a;border-radius:3px;background:linear-gradient(#fbfbf9 0,#e6e6e4 44%,#5a5a55 46%,#5a5a55 52%,#d6d6d4 54%,#c6c6c4 100%);box-shadow:0 1.5px 1.5px rgba(0,0,0,.25)"></div>
<div class="a inp" style="left:1095.8px;top:530px;width:33px;height:20.5px;"></div>
<span class="t" style="left:1105.75px;top:535px;font-size:9.5px;color:#222;letter-spacing:-0.45px;">0.0</span>
</section>
<!-- Parameter Modulation window -->
<section id="param-window" class="g">
<div class="a" style="left:332px;top:391px;width:606px;height:335px;background:#ebebe8;border-radius:5.5px;box-shadow:0 0 0 .6px rgba(0,0,0,.3),0 6px 14px rgba(0,0,0,.42)"></div>
<div class="a" style="left:332px;top:391px;width:606px;height:20px;background:linear-gradient(#e5e5e3,#cfcfcd);border-radius:5.5px 5.5px 0 0;border-bottom:1px solid #b6b6b3"></div>
<div class="a" style="left:339.15px;top:395.9px;width:11.2px;height:11.2px;border-radius:50%;background:#ee3a44;border:.5px solid #d62a34"></div>
<div class="a" style="left:357.4px;top:395.9px;width:11.2px;height:11.2px;border-radius:50%;background:#d7d7d5;border:.6px solid #c4c4c2"></div>
<div class="a" style="left:375.6px;top:395.9px;width:11.2px;height:11.2px;border-radius:50%;background:#d7d7d5;border:.6px solid #c4c4c2"></div>
<span class="t" style="left:434.4px;top:396px;font-size:12px;color:#404040;letter-spacing:0.07px;">Parameter Modulation/Link for Gain-Low Shelf 2 / ReaEQ - (1: Drum Beat)</span>
<div class="a cb" style="left:346.9px;top:422.4px;width:12.5px;height:12.5px;"><svg width="12.5" height="12.5" viewBox="0 0 12.5 12.5" style="display:block"><path d="M3 6.6L5.4 9.2 9.6 3.2" stroke="#fff" stroke-width="1.5" fill="none" stroke-linecap="round" stroke-linejoin="round"/></svg></div>
<span class="t" style="left:363.5px;top:424px;font-size:10px;color:#222;letter-spacing:-0.11px;">Enable parameter modulation, baseline value (envelope overrides):</span>
<div class="a" style="left:345.5px;top:441px;width:334.5px;height:17px;background:#e4e5e1"></div>
<div class="a th" style="left:503.8px;top:443px;width:17.2px;height:15.6px;"></div>
<span class="t" style="left:346.9px;top:469px;font-size:10px;color:#222;letter-spacing:-0.05px;">Output:</span>
<div class="a" style="left:388.5px;top:472.3px;width:290px;height:4.4px;background:#d0d0ce;border-radius:2.2px"></div>
<div class="a" style="left:388.5px;top:471.3px;width:165.5px;height:6.2px;background:#3579e2;border-radius:3.1px 1px 1px 3.1px"></div>
<div class="a cb" style="left:346.9px;top:487.6px;width:12.5px;height:12.5px;"><svg width="12.5" height="12.5" viewBox="0 0 12.5 12.5" style="display:block"><path d="M3 6.6L5.4 9.2 9.6 3.2" stroke="#fff" stroke-width="1.5" fill="none" stroke-linecap="round" stroke-linejoin="round"/></svg></div>
<span class="t" style="left:363.5px;top:490px;font-size:10px;color:#222;letter-spacing:-0.07px;">Audio control signal (sidechain)</span>
<div class="a" style="left:343px;top:500px;width:334.5px;height:226px;background:#e0e1dd;border-radius:3px;border-top:1px solid #e6e6e3"></div>
<span class="t" style="left:350.25px;top:512px;font-size:10px;color:#222;letter-spacing:-0.16px;">Track audio channel:</span>
<div class="a" style="left:458px;top:507.5px;width:74.6px;height:15.2px;background:linear-gradient(#fefefc,#f1f1ee);border:1px solid #adadaa"></div>
<span class="t" style="left:463.5px;top:512px;font-size:9.5px;color:#222;">5+6</span>
<svg class="a" style="left:518.5px;top:508.5px" width="11" height="13" viewBox="0 0 11 13"><path d="M2.6 4.6L5.5 1.8 8.4 4.6M2.6 8.4L5.5 11.2 8.4 8.4" stroke="#3a3a3a" stroke-width="1.2" fill="none"/></svg>
<span class="t" style="left:349.75px;top:536px;font-size:10px;color:#222;letter-spacing:-0.15px;">Input:</span>
<div class="a" style="left:418px;top:532px;width:162.6px;height:20px;background:linear-gradient(90deg,#1fbe9e,#1cd6a0 55%,#18e896)"></div>
<div class="a" style="left:580.6px;top:532px;width:63.2px;height:20px;background:linear-gradient(#116f3d 0,#116f3d 50%,#0d5a30 51%,#0d5a30 56%,#116f3d 58%)"></div>
<div class="a" style="left:643.8px;top:532px;width:21.5px;height:20px;background:#5a0c0c"></div>
<div class="a" style="left:589px;top:532px;width:1px;height:20px;background:#8ec9a8"></div>
<div class="a" style="left:426.75px;top:532px;width:1px;height:2.4px;background:#d8f4e8"></div>
<div class="a" style="left:426.75px;top:549.4px;width:1px;height:2.6px;background:#d8f4e8"></div>
<span class="t" style="left:419.55px;top:538px;font-size:9px;color:#d5f3e6;">-60</span>
<div class="a" style="left:469.75px;top:532px;width:1px;height:2.4px;background:#d8f4e8"></div>
<div class="a" style="left:469.75px;top:549.4px;width:1px;height:2.6px;background:#d8f4e8"></div>
<span class="t" style="left:462.55px;top:538px;font-size:9px;color:#d5f3e6;">-48</span>
<div class="a" style="left:513.9px;top:532px;width:1px;height:2.4px;background:#d8f4e8"></div>
<div class="a" style="left:513.9px;top:549.4px;width:1px;height:2.6px;background:#d8f4e8"></div>
<span class="t" style="left:506.7px;top:538px;font-size:9px;color:#d5f3e6;">-36</span>
<div class="a" style="left:556.75px;top:532px;width:1px;height:2.4px;background:#d8f4e8"></div>
<div class="a" style="left:556.75px;top:549.4px;width:1px;height:2.6px;background:#d8f4e8"></div>
<span class="t" style="left:549.55px;top:538px;font-size:9px;color:#d5f3e6;">-24</span>
<div class="a" style="left:600.1px;top:532px;width:1px;height:2.4px;background:#d8f4e8"></div>
<div class="a" style="left:600.1px;top:549.4px;width:1px;height:2.6px;background:#d8f4e8"></div>
<span class="t" style="left:592.9px;top:538px;font-size:9px;color:#cfe6d8;">-12</span>
<span class="t" style="left:640.6px;top:538px;font-size:9px;color:#f0c8bc;letter-spacing:0.02px;">-14.7</span>
<span class="t" style="left:349.75px;top:563px;font-size:10px;color:#222;letter-spacing:-0.05px;">Attack:</span>
<div class="a band" style="left:418px;top:557px;width:177.6px;height:22px;"></div>
<div class="a mk" style="left:475.25px;top:560.2px;width:1.5px;height:15.6px;"></div>
<div class="a th" style="left:440px;top:560.2px;width:17.2px;height:15.2px;"></div>
<div class="a inp" style="left:601.2px;top:556.6px;width:48.6px;height:18px;"></div>
<span class="t" style="left:605px;top:561px;font-size:9.5px;color:#1c1c1c;letter-spacing:-0.45px;">127</span>
<span class="t" style="left:655.6px;top:559px;font-size:10px;color:#222;letter-spacing:-0.45px;">ms</span>
<span class="t" style="left:349.75px;top:588px;font-size:10px;color:#222;letter-spacing:-0.45px;">Release:</span>
<div class="a band" style="left:418px;top:581.5px;width:177.6px;height:22px;"></div>
<div class="a mk" style="left:475.25px;top:584.7px;width:1.5px;height:15.6px;"></div>
<div class="a th" style="left:493.8px;top:584.7px;width:17.2px;height:15.2px;"></div>
<div class="a inp" style="left:601.2px;top:581.2px;width:48.6px;height:17.6px;"></div>
<span class="t" style="left:605px;top:586px;font-size:9.5px;color:#1c1c1c;letter-spacing:0.57px;">466</span>
<span class="t" style="left:655.6px;top:583px;font-size:10px;color:#222;letter-spacing:-0.45px;">ms</span>
<span class="t" style="left:349.75px;top:614px;font-size:10px;color:#222;letter-spacing:-0.21px;">Min volume:</span>
<div class="a band" style="left:418px;top:606px;width:177.6px;height:22px;"></div>
<div class="a th" style="left:491.5px;top:609.2px;width:17.2px;height:15.2px;"></div>
<div class="a inp" style="left:601.2px;top:605.6px;width:48.6px;height:21px;"></div>
<span class="t" style="left:605px;top:611px;font-size:9.5px;color:#1c1c1c;letter-spacing:0.36px;">-26.95</span>
<span class="t" style="left:655.6px;top:612px;font-size:10px;color:#222;letter-spacing:-0.45px;">dB</span>
<span class="t" style="left:349.75px;top:638px;font-size:10px;color:#222;letter-spacing:-0.25px;">Max volume:</span>
<div class="a band" style="left:418px;top:630.6px;width:177.6px;height:22px;"></div>
<div class="a th" style="left:551px;top:633.8px;width:17.2px;height:15.2px;"></div>
<div class="a inp" style="left:601.2px;top:630.6px;width:48.6px;height:21px;"></div>
<span class="t" style="left:605px;top:635px;font-size:9.5px;color:#1c1c1c;letter-spacing:0.01px;">0.00</span>
<span class="t" style="left:655.6px;top:637px;font-size:10px;color:#222;letter-spacing:-0.45px;">dB</span>
<span class="t" style="left:349.75px;top:662px;font-size:10px;color:#222;letter-spacing:-0.04px;">Strength:</span>
<div class="a band" style="left:418px;top:655.4px;width:177.6px;height:22px;"></div>
<div class="a mk" style="left:585.75px;top:658.6px;width:1.5px;height:15.6px;"></div>
<div class="a th" style="left:484px;top:658.6px;width:17.2px;height:15.2px;"></div>
<div class="a inp" style="left:601.2px;top:655.6px;width:48.6px;height:21px;"></div>
<span class="t" style="left:605px;top:660px;font-size:9.5px;color:#1c1c1c;letter-spacing:0.01px;">40.7</span>
<span class="t" style="left:655.6px;top:662px;font-size:10px;color:#222;">%</span>
<span class="t" style="left:349.75px;top:685px;font-size:10px;color:#222;letter-spacing:-0.08px;">Direction:</span>
<div class="a" style="left:418.4px;top:683.6px;width:14.4px;height:14.4px;border-radius:50%;background:radial-gradient(circle,#fff 0,#fff 2.3px,#3579e2 3.1px)"></div>
<span class="t" style="left:435.9px;top:687px;font-size:10px;color:#222;letter-spacing:-0.19px;">Negative</span>
<div class="a rb" style="left:489.25px;top:683.6px;width:14px;height:14px;"></div>
<span class="t" style="left:506.9px;top:687px;font-size:10px;color:#222;letter-spacing:-0.26px;">Centered</span>
<div class="a rb" style="left:560.1px;top:683.6px;width:14px;height:14px;"></div>
<span class="t" style="left:577.5px;top:687px;font-size:10px;color:#222;letter-spacing:-0.21px;">Positive</span>
<div class="a" style="left:418.5px;top:704.6px;width:253px;height:4.4px;background:#cfcfcd;border-radius:2.2px"></div>
<div class="a" style="left:418.5px;top:703.8px;width:34.6px;height:6px;background:#3579e2;border-radius:3px 1px 1px 3px"></div>
<span class="t" style="left:698.25px;top:490px;font-size:10px;color:#222;letter-spacing:0.34px;">Audio control signal shaping</span>
<div class="a" style="left:688.5px;top:500.5px;width:243px;height:226px;background:#f0f0ee;border-radius:2px"></div>
<svg class="a" style="left:693px;top:503.5px" width="235" height="209" viewBox="693 503.5 235 209"><rect x="693" y="503.5" width="235" height="209" fill="#000"/><path d="M695 640.3H774.3V711" stroke="#173017" stroke-width="1" fill="none"/><path d="M695.5 710.5L927 504.5" stroke="#bcbcb8" stroke-width="1.05"/><path d="M695 640V711.2H774.5" stroke="#3fe04a" stroke-width="2" fill="none"/><path d="M772.2 640.4H776.4M774.3 638.3V642.5" stroke="#6df27a" stroke-width="1"/><circle cx="810.8" cy="608.8" r="1.9" fill="#d0212f"/></svg>
</section>
<svg class="a" style="left:568px;top:466px" width="32" height="44" viewBox="-4 -4 26 36"><defs><filter id="cs" x="-50%" y="-50%" width="200%" height="200%"><feGaussianBlur stdDeviation="1.1"/></filter></defs><path d="M0 0V21L5 16.5 8.5 24.5 12 23 8.5 15.2H15Z" transform="translate(1,2)" fill="rgba(0,0,0,.45)" filter="url(#cs)"/><path d="M0 0V21L5 16.5 8.5 24.5 12 23 8.5 15.2H15Z" fill="#000" stroke="#fff" stroke-width="1.5" stroke-linejoin="round"/></svg>
<span class="t" style="left:987.14px;top:677px;font-size:29px;color:#fff;letter-spacing:0.03px;-webkit-text-stroke:.55px #b4b6b5;text-shadow:2px 3px 4px rgba(0,0,0,.36);">www.musicaudio.net</span>
</div>
</body>
</html>
